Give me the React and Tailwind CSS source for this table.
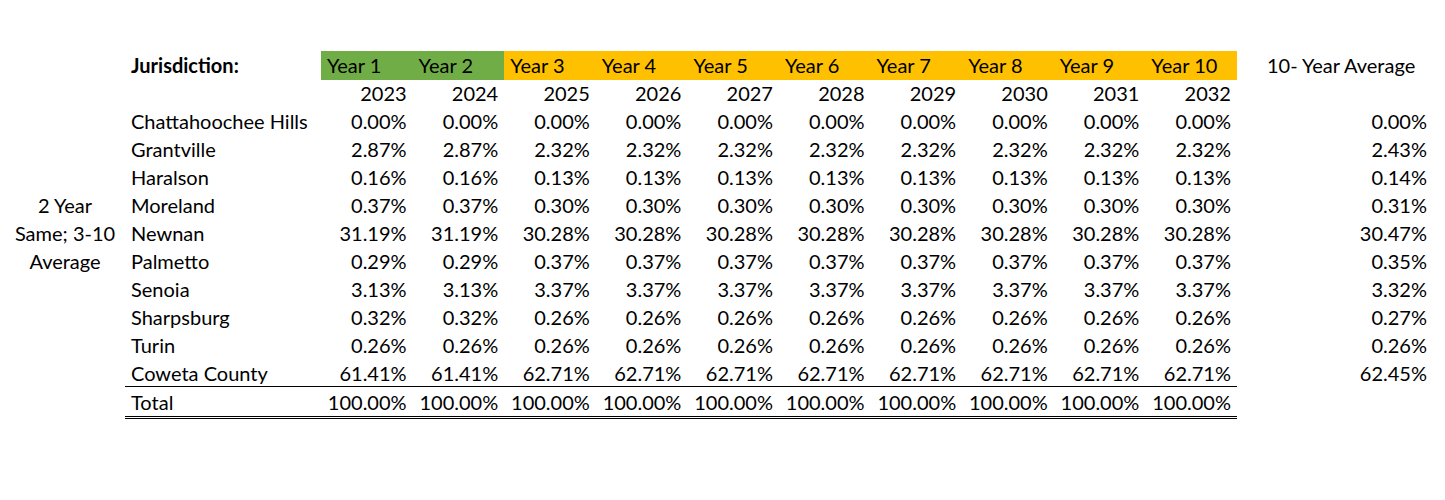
const years = [2023, 2024, 2025, 2026, 2027, 2028, 2029, 2030, 2031, 2032];

const rows = [
    { name: "Chattahoochee Hills", a: "0.00%", b: "0.00%", avg: "0.00%" },
    { name: "Grantville", a: "2.87%", b: "2.32%", avg: "2.43%" },
    { name: "Haralson", a: "0.16%", b: "0.13%", avg: "0.14%" },
    { name: "Moreland", a: "0.37%", b: "0.30%", avg: "0.31%", label: "2 Year" },
    { name: "Newnan", a: "31.19%", b: "30.28%", avg: "30.47%", label: "Same; 3-10" },
    { name: "Palmetto", a: "0.29%", b: "0.37%", avg: "0.35%", label: "Average" },
    { name: "Senoia", a: "3.13%", b: "3.37%", avg: "3.32%" },
    { name: "Sharpsburg", a: "0.32%", b: "0.26%", avg: "0.27%" },
    { name: "Turin", a: "0.26%", b: "0.26%", avg: "0.26%" },
    { name: "Coweta County", a: "61.41%", b: "62.71%", avg: "62.45%" },
];

const App = () => {
    return (
        <div
            className="w-[1445px] h-[500px] bg-white text-black pt-[51px] text-[20px]"
            style={{ fontFamily: "Lato, 'Open Sans', sans-serif" }}>
            <div className="grid grid-cols-[125px_196px_repeat(10,91.6px)_195px] auto-rows-[28px] items-center">
                {/* header */}
                <div className="h-[29px]" />
                <div className="h-[29px] flex items-center pl-[6px] font-bold">
                    Jurisdiction:
                </div>
                {years.map((y, i) => (
                    <div
                        key={y}
                        className={
                            i < 2
                                ? "h-[29px] flex items-center pl-[6px] bg-[#70ad47]"
                                : "h-[29px] flex items-center pl-[6px] bg-[#ffc000]"
                        }>
                        Year {i + 1}
                    </div>
                ))}
                <div className="h-[29px] flex items-center pl-[30px]">
                    10- Year Average
                </div>

                {/* years */}
                <div />
                <div />
                {years.map((y) => (
                    <div key={y} className="text-right pr-[6px]">
                        {y}
                    </div>
                ))}
                <div />

                {rows.map((r, idx) => {
                    const last = idx === rows.length - 1;
                    const line = last ? " h-full flex items-center border-b border-black" : "";
                    return [
                        <div key={r.name + "l"} className="text-center pl-[5px] whitespace-nowrap">
                            {r.label}
                        </div>,
                        <div key={r.name + "n"} className={"pl-[6px]" + line}>
                            {r.name}
                        </div>,
                        ...years.map((y, i) => (
                            <div
                                key={r.name + y}
                                className={"text-right pr-[6px]" + (last ? " h-full flex items-center justify-end border-b border-black" : "")}>
                                {i < 2 ? r.a : r.b}
                            </div>
                        )),
                        <div key={r.name + "a"} className="text-right pr-[5px]">
                            {r.avg}
                        </div>,
                    ];
                })}

                {/* total */}
                <div />
                <div className="self-start h-[32px] flex items-center pl-[6px] border-b-[3px] border-double border-black">
                    Total
                </div>
                {years.map((y) => (
                    <div
                        key={y}
                        className="self-start h-[32px] flex items-center justify-end pr-[6px] border-b-[3px] border-double border-black">
                        100.00%
                    </div>
                ))}
                <div />
            </div>
        </div>
    );
};

export default App;
